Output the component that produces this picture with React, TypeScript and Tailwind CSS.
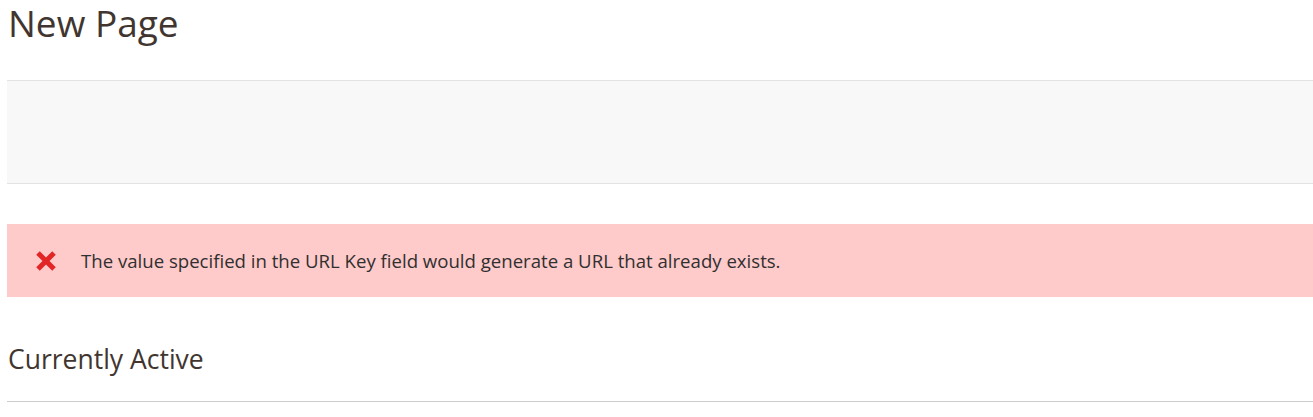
import React from "react"

function ErrorIcon() {
  return (
    <svg width="20" height="20" viewBox="0 0 20 20" className="shrink-0">
      <path d="M2 2 L18 18 M18 2 L2 18" stroke="#e22626" strokeWidth="5" strokeLinecap="butt" />
    </svg>
  )
}

export default function App() {
  return (
    <div className="bg-white min-h-[417px] pl-[7px] font-['Open_Sans',sans-serif] text-[#303030]">
      {/* Page title */}
      <div className="h-[80px] pt-px">
        <h1 className="-mt-[4px] text-[37px] font-normal leading-[52px] text-[#41362f] pl-[1px]">New Page</h1>
      </div>

      {/* Actions toolbar */}
      <div className="h-[104px] bg-[#f8f8f8] border-y border-[#e3e3e3]" />

      {/* Messages */}
      <div className="mt-[40px] h-[73px] bg-[#ffcaca] flex items-center pl-[29px] gap-[25px]">
        <ErrorIcon />
        <p className="text-[18.6px] leading-[26px]">
          The value specified in the URL Key field would generate a URL that already exists.
        </p>
      </div>

      {/* Section */}
      <div className="mt-[44px] border-b border-[#cccccc] pb-[24px]">
        <h2 className="text-[26.5px] leading-[36px] pl-[1px] text-[#41362f]">Currently Active</h2>
      </div>
    </div>
  )
}
